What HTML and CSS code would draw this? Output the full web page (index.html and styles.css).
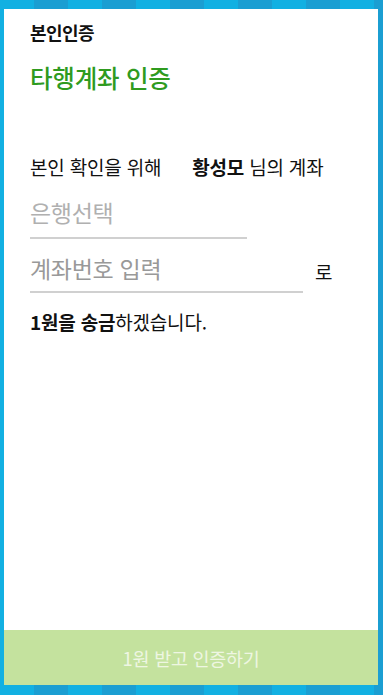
FILE: index.html
```html
<!DOCTYPE html>
<html lang="ko">
<head>
<meta charset="utf-8">
<title>본인인증</title>
<link rel="stylesheet" href="styles.css">
</head>
<body>
<div class="frame">
  <div class="panel">
    <div class="content">
      <div class="page-label">본인인증</div>
      <h1 class="title">타행계좌 인증</h1>
      <p class="line intro"><span>본인 확인을 위해</span><span class="name"><b>황성모</b> 님의 계좌</span></p>
      <div class="field bank"><span class="placeholder light">은행선택</span></div>
      <div class="account-row">
        <div class="field account"><span class="placeholder">계좌번호 입력</span></div>
        <span class="suffix">로</span>
      </div>
      <p class="line send"><b>1원을 송금</b>하겠습니다.</p>
    </div>
    <div class="submit">1원 받고 인증하기</div>
  </div>
</div>
</body>
</html>
```
FILE: styles.css
```css
html, body {
  margin: 0;
  padding: 0;
}
body {
  width: 383px;
  height: 695px;
  overflow: hidden;
  font-family: "Noto Sans CJK KR", "Noto Sans", sans-serif;
  color: #111;
  background-color: #15a8dc;
  background-image: repeating-linear-gradient(90deg, #12b0e2 0 34px, #1b9ed2 34px 68px);
}
.frame {
  padding: 9px 5px 10px 4px;
  height: 695px;
  box-sizing: border-box;
}
.panel {
  background: #fff;
  height: 100%;
  display: flex;
  flex-direction: column;
}
.content {
  flex: 1;
  padding: 12px 0 0 26px;
}
.page-label {
  font-size: 18px;
  font-weight: 700;
  line-height: 22px;
  letter-spacing: -0.6px;
}
.title {
  margin: 20px 0 0;
  font-size: 24.5px;
  font-weight: 500;
  line-height: 30px;
  color: #2f9b1f;
  letter-spacing: -0.2px;
}
.line {
  margin: 0;
  font-size: 19px;
  line-height: 24px;
  letter-spacing: -0.2px;
}
.line b {
  font-weight: 700;
}
.intro {
  margin-top: 62px;
  display: flex;
}
.name {
  margin-left: 31px;
}
.field {
  border-bottom: 2px solid #d0d0d0;
}
.placeholder {
  font-size: 23px;
  line-height: 30px;
  color: #999;
  letter-spacing: -0.3px;
}
.placeholder.light {
  color: #b0b0b0;
}
.bank {
  width: 217px;
  margin-top: 18px;
  padding-bottom: 10px;
}
.account-row {
  display: flex;
  align-items: flex-start;
  margin-top: 14px;
}
.account {
  width: 273px;
  padding-bottom: 8px;
}
.suffix {
  margin-left: 12px;
  font-size: 19px;
  line-height: 24px;
  margin-top: 7px;
}
.send {
  margin-top: 17px;
}
.submit {
  height: 55px;
  background: #c4e29e;
  color: #eef6e2;
  font-size: 18.5px;
  display: flex;
  align-items: center;
  justify-content: center;
  letter-spacing: -0.3px;
}
```
